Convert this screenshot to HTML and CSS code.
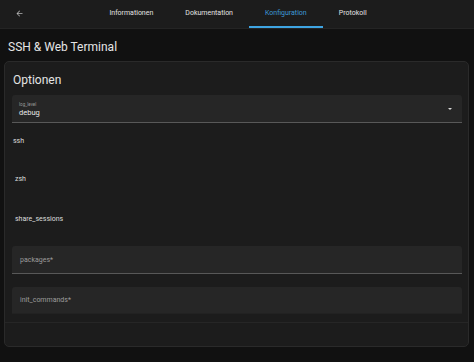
FILE: index.html
```html
<!DOCTYPE html>
<html lang="de">
<head>
  <meta charset="UTF-8">
  <meta name="viewport" content="width=device-width, initial-scale=1.0">
  <title>SSH &amp; Web Terminal — Konfiguration</title>
  <link rel="stylesheet" href="styles.css">
</head>
<body>
  <header class="toolbar">
    <button class="back" aria-label="Zurück">
      <svg width="9" height="9" viewBox="0 0 24 24"><path d="M20 11H7.83l5.59-5.59L12 4l-8 8 8 8 1.41-1.41L7.83 13H20v-2z" fill="#b5b5b5"/></svg>
    </button>
    <nav class="tabs">
      <a class="tab">Informationen</a>
      <a class="tab">Dokumentation</a>
      <a class="tab active">Konfiguration</a>
      <a class="tab">Protokoll</a>
    </nav>
  </header>

  <main class="content">
    <h1 class="title">SSH &amp; Web Terminal</h1>

    <div class="card">
      <h2 class="card-title">Optionen</h2>

      <div class="field select">
        <span class="field-label">log_level</span>
        <span class="field-value">debug</span>
        <span class="arrow"></span>
      </div>

      <div class="row first">ssh</div>
      <div class="row">zsh</div>
      <div class="row last">share_sessions</div>

      <div class="field text">
        <span class="placeholder">packages*</span>
      </div>
      <div class="field text plain">
        <span class="placeholder">init_commands*</span>
      </div>

      <div class="card-actions"></div>
    </div>
  </main>
</body>
</html>
```

FILE: styles.css
```css
* {
  margin: 0;
  padding: 0;
  box-sizing: border-box;
}

body {
  background-color: #111111;
  color: #e1e1e1;
  font-family: Roboto, 'Noto Sans', sans-serif;
  width: 474px;
  height: 362px;
  overflow: hidden;
}

.toolbar {
  height: 29px;
  background: #1c1c1c;
  border-bottom: 1px solid #242424;
  position: relative;
  display: flex;
  justify-content: center;
}

.back {
  position: absolute;
  left: 15px;
  top: 9px;
  background: none;
  border: none;
  width: 10px;
  height: 10px;
  display: flex;
}

.tabs {
  display: flex;
  height: 28px;
  margin-left: 2px;
}

.tab {
  padding: 0 16px;
  font-size: 7px;
  line-height: 27px;
  color: #e2e2e2;
  border-bottom: 2px solid transparent;
  height: 28px;
}

.tab.active {
  color: #3d9ad6;
  border-bottom-color: #3ea4e2;
}

.content {
  padding: 10px 5px 0 4px;
}

.title {
  font-size: 12px;
  font-weight: 400;
  line-height: 16px;
  color: #e6e6e6;
  padding-left: 4px;
  margin-bottom: 6px;
}

.card {
  background: #1c1c1c;
  border: 1px solid #2a2a2a;
  border-radius: 5px;
  padding: 10px 6px 0 7px;
  height: 286px;
  overflow: hidden;
}

.card-title {
  font-size: 12px;
  font-weight: 400;
  line-height: 16px;
  color: #e4e4e4;
  padding-left: 1px;
  margin-bottom: 7px;
}

.field {
  background: #262626;
  border-radius: 3px 3px 0 0;
  border-bottom: 1px solid #585858;
  height: 28px;
  position: relative;
  padding-left: 7px;
}

.field-label {
  display: block;
  font-size: 4.5px;
  color: #9a9a9a;
  padding-top: 7px;
  line-height: 5px;
}

.field-value {
  display: block;
  font-size: 7.5px;
  line-height: 11px;
  color: #e8e8e8;
}

.arrow {
  position: absolute;
  right: 10px;
  top: 13px;
  border-left: 2.5px solid transparent;
  border-right: 2.5px solid transparent;
  border-top: 2.5px solid #d8d8d8;
}

.row {
  height: 40px;
  line-height: 40px;
  font-size: 7px;
  color: #dcdcdc;
  padding-left: 3px;
}

.row.first {
  height: 36px;
  line-height: 36px;
  padding-left: 1px;
}

.row.last {
  margin-bottom: 7px;
}

.field.text {
  display: flex;
  align-items: center;
  padding-left: 8px;
  margin-bottom: 13px;
}

.field.plain {
  border-bottom-color: #222222;
  height: 27px;
  margin-bottom: 8px;
}

.placeholder {
  font-size: 7px;
  color: #9c9c9c;
}

.card-actions {
  border-top: 1px solid #262626;
  margin: 0 -6px 0 -7px;
  height: 24px;
}
```
